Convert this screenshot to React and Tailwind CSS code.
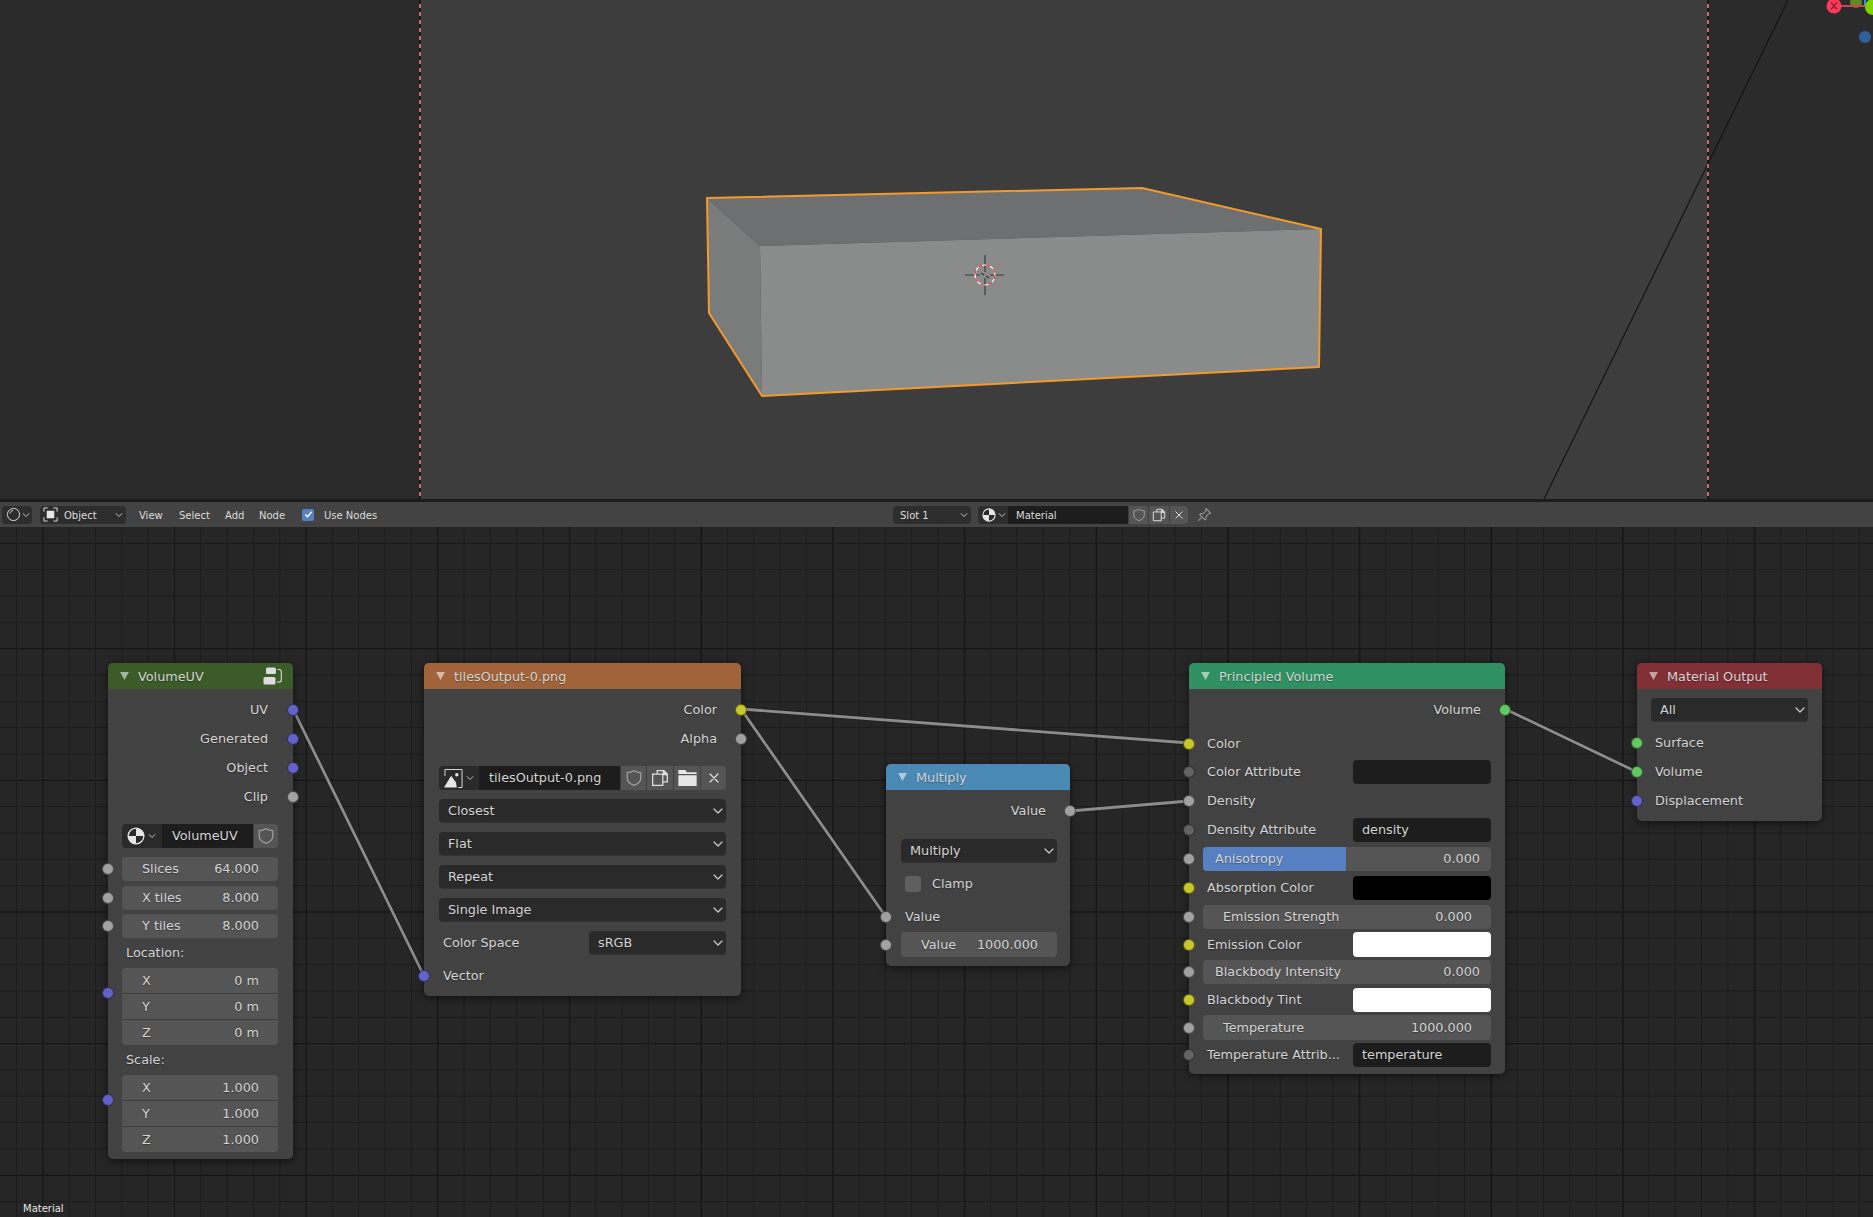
const font = { fontFamily: '"DejaVu Sans", sans-serif' };

function Chevron({ className = "" }) {
  return (
    <svg viewBox="0 0 10 6" className={`w-[10px] h-[6px] shrink-0 ${className}`} fill="none" stroke="#c8c8c8" strokeWidth="1.3" strokeLinecap="round" strokeLinejoin="round">
      <path d="M1 1l4 4 4-4" />
    </svg>
  );
}

function SphereIcon({ size = 15 }) {
  return (
    <svg viewBox="0 0 16 16" width={size} height={size} className="shrink-0">
      <circle cx="8" cy="8" r="7" fill="#e6e6e6" />
      <path d="M8 1a7 7 0 0 0-7 7h7zM8 8v7a7 7 0 0 0 7-7z" fill="#2a2a2a" />
      <circle cx="8" cy="8" r="7" fill="none" stroke="#e6e6e6" strokeWidth="1.2" />
    </svg>
  );
}

function ShieldIcon({ size = 16 }) {
  return (
    <svg viewBox="0 0 16 16" width={size} height={size} fill="none" stroke="#a0a0a0" strokeWidth="1.1">
      <path d="M8 1.5c2 1.2 3.8 1.6 6 1.7v5c0 3-2.6 5-6 6.3-3.4-1.3-6-3.3-6-6.3v-5c2.200-.1 4-.5 6-1.700z" />
    </svg>
  );
}

function CopyIcon({ size = 16 }) {
  return (
    <svg viewBox="0 0 16 16" width={size} height={size} fill="none" stroke="#e0e0e0" strokeWidth="1.1">
      <path d="M5.500 4.500V1.500h6l3 3v7h-4" />
      <path d="M1.500 4.500h9v10h-9z" />
      <path d="M11 1.500v3.500h3.500" fill="#e0e0e0" />
    </svg>
  );
}

function CloseIcon({ size = 10 }) {
  return (
    <svg viewBox="0 0 10 10" width={size} height={size} fill="none" stroke="#e0e0e0" strokeWidth="1.2" strokeLinecap="round">
      <path d="M1 1l8 8M9 1l-8 8" />
    </svg>
  );
}

function FolderIcon() {
  return (
    <svg viewBox="0 0 16 14" width="19" height="16" fill="#e6e6e6">
      <path d="M0 0h6l1.500 2H16v1.500H0zM0 4.500h16V14H0z" />
    </svg>
  );
}

function PinIcon() {
  return (
    <svg viewBox="0 0 16 16" width="15" height="15" fill="none" stroke="#9a9a9a" strokeWidth="1.1" strokeLinejoin="round">
      <path d="M9.500 1.500l5 5-2 .7-3 3 .2 2.500-1.200 1-5.500-5.500 1-1.200 2.500.2 3-3zM5 11l-3.500 3.500" />
    </svg>
  );
}

function ImageIcon() {
  return (
    <svg viewBox="0 0 20 20" width="19" height="19" className="shrink-0">
      <path d="M1 .5h18v19h-4" fill="none" stroke="#e0e0e0" strokeWidth="1" />
      <path d="M1 .5v7" fill="none" stroke="#e0e0e0" strokeWidth="1" />
      <path d="M0 19.500L7.500 7l5 7 1 5.500z" fill="#e6e6e6" />
      <circle cx="13.500" cy="6" r="1.800" fill="#e6e6e6" />
    </svg>
  );
}

function GroupIcon() {
  return (
    <svg viewBox="0 0 19 18" width="19" height="18" className="absolute right-[11px] top-[4px]">
      <rect x="3" y="0.500" width="10" height="6.500" rx="1.500" fill="#dcdcdc" />
      <rect x="0.500" y="10" width="12" height="7.500" rx="1.500" fill="#dcdcdc" />
      <path d="M14.500 2.500h1.500c1.500 0 2.300.8 2.300 2.200v8c0 1.500-.8 2.300-2.300 2.300h-2" fill="none" stroke="#dcdcdc" strokeWidth="1.100" />
    </svg>
  );
}

function Socket({ side = "left", color = "bg-[#a1a1a1]", top = "top-1/2" }) {
  const pos = side === "left" ? "left-[-6px]" : "right-[-6px]";
  return <span className={`absolute ${pos} ${top} -translate-y-1/2 w-[12px] h-[12px] rounded-full border border-black/50 ${color}`} />;
}

function Row({ socket, side = "left", socketTop, className = "", children }) {
  return (
    <div className={`relative flex items-center ${className}`}>
      {socket && <Socket side={side} color={socket} top={socketTop} />}
      {children}
    </div>
  );
}

function Output({ label, socket, className = "pr-[24px]" }) {
  return (
    <Row socket={socket} side="right" className={`h-[29px] justify-end ${className}`}>
      {label}
    </Row>
  );
}

function Input({ label, socket, className = "h-[29px] pl-[18px]" }) {
  return (
    <Row socket={socket} className={className}>
      {label}
    </Row>
  );
}

function Dropdown({ label, className = "" }) {
  return (
    <div className={`flex items-center justify-between h-[24px] pl-[9px] pr-[3px] rounded-[4px] bg-[#2a2a2a] border-b border-[#333333] ${className}`}>
      <span className="pt-[1px]">{label}</span>
      <Chevron />
    </div>
  );
}

function NumField({ label, value, className = "pl-[20px] pr-[19px]" }) {
  return (
    <div className={`flex-1 flex items-center justify-between h-full rounded-[4px] bg-[#555555] ${className}`}>
      <span>{label}</span>
      <span>{value}</span>
    </div>
  );
}

function NodeBox({ title, head, className = "", icon, children }) {
  return (
    <div className={`absolute rounded-[5px] bg-[#424242] text-[12.8px] text-[#d4d4d4] shadow-[0_2px_8px_rgba(0,0,0,0.55)] [text-shadow:0_1px_1px_rgba(0,0,0,0.35)] ${className}`}>
      <div className={`relative flex items-center h-[26px] pl-[12px] gap-[9px] rounded-t-[5px] ${head}`}>
        <svg viewBox="0 0 10 9" className="w-[9px] h-[8px] shrink-0" fill="#ffffff" fillOpacity="0.55">
          <path d="M0 0h10L5 9z" />
        </svg>
        <span className="pt-[1px]">{title}</span>
        {icon}
      </div>
      {children}
    </div>
  );
}

function VectorGroup({ items }) {
  return (
    <div className="flex-1 flex flex-col h-[77px] rounded-[4px] overflow-hidden bg-[#555555] divide-y divide-[#3d3d3d]">
      {items.map(([k, v]) => (
        <div key={k} className="flex-1 flex items-center justify-between pl-[20px] pr-[19px]">
          <span>{k}</span>
          <span>{v}</span>
        </div>
      ))}
    </div>
  );
}

function IconButton({ className = "", children }) {
  return <div className={`flex items-center justify-center h-full bg-[#555555] border-l border-[#3d3d3d] ${className}`}>{children}</div>;
}

const BLUE = "bg-[#6363c7]";
const GREY = "bg-[#a1a1a1]";
const DARK = "bg-[#636363]";
const YELLOW = "bg-[#c7c729]";
const GREEN = "bg-[#63c763]";

function Viewport() {
  return (
    <div className="relative flex h-[499px] bg-[#2b2b2b]">
      <div className="w-[420px]" />
      <div className="w-[1288px] bg-[#3d3d3d]" />
      <svg viewBox="0 0 1873 499" className="absolute inset-0 w-[1873px] h-[499px]">
        <path d="M1788 0L1544 499" stroke="#141414" strokeWidth="1.200" />
        <path d="M420 0V499M1708 0V499" stroke="#111111" strokeWidth="1.500" strokeDasharray="4 4" />
        <path d="M420 0V499M1708 0V499" stroke="#ff7878" strokeWidth="1.500" strokeDasharray="4 4" strokeDashoffset="4" />
        <path d="M707 198L760 246L762 396L709 313z" fill="#7a7c7b" />
        <path d="M707 198L1142 188L1321 229L760 246z" fill="#6e6f71" />
        <path d="M760 246L1321 229L1319 367L762 396z" fill="#8a8b8b" />
        <path d="M707 198L1142 188L1321 229L1319 367L762 396L709 313z" fill="none" stroke="#f39a2e" strokeWidth="2" strokeLinejoin="round" />
        <path d="M985 255V272M985 278V295M965 275H980M990 275H1004" stroke="#3a3a3a" strokeWidth="1.200" />
        <circle cx="985" cy="275" r="10" fill="none" stroke="#ffffff" strokeWidth="1.200" />
        <circle cx="985" cy="275" r="10" fill="none" stroke="#e8323c" strokeWidth="1.200" strokeDasharray="4 4" />
        <path d="M981 273l3 2M986 276l3 2" stroke="#111111" strokeWidth="1" />
        <circle cx="1856" cy="2" r="6" fill="#5f8a24" />
        <path d="M1834 6H1866" stroke="#d8405a" strokeWidth="2" />
        <path d="M1865 0V6" stroke="#3d8ee0" strokeWidth="2" />
        <circle cx="1834" cy="6" r="7.500" fill="#fb3b5a" />
        <path d="M1831 2.500l6 7M1837 2.500l-6 7" stroke="#8c1c30" strokeWidth="1.200" />
        <circle cx="1873" cy="7" r="8" fill="#7fd400" />
        <circle cx="1865" cy="37" r="6" fill="#2f5f9c" />
      </svg>
    </div>
  );
}

function HeaderBar() {
  return (
    <div className="flex items-center h-[25px] pl-[2px] bg-[#434343] text-[10px] text-[#dcdcdc]">
      <div className="flex items-center w-[30px] h-[18px] pl-[4px] rounded-[4px] bg-[#2d2d2d]">
        <svg viewBox="0 0 16 16" width="15" height="15" fill="none" stroke="#e0e0e0" strokeWidth="1" className="shrink-0">
          <circle cx="8" cy="8" r="6.500" />
          <path d="M4.500 7c0-2 1.200-3 3-3.300" />
        </svg>
        <Chevron className="scale-75" />
      </div>
      <div className="flex items-center ml-[8px] w-[86px] h-[18px] pl-[3px] pr-[2px] rounded-[4px] bg-[#2d2d2d]">
        <svg viewBox="0 0 16 16" width="15" height="15" fill="none" stroke="#e0e0e0" strokeWidth="1">
          <path d="M1 5V1h4M11 1h4v4M15 11v4h-4M5 15H1v-4" />
          <rect x="4" y="4" width="8" height="8" fill="#e6e6e6" stroke="none" />
        </svg>
        <span className="ml-[6px] pt-[1px]">Object</span>
        <Chevron className="ml-auto scale-75" />
      </div>
      <span className="ml-[13px] w-[40px] pt-[1px]">View</span>
      <span className="w-[46px] pt-[1px]">Select</span>
      <span className="w-[34px] pt-[1px]">Add</span>
      <span className="w-[43px] pt-[1px]">Node</span>
      <div className="flex items-center justify-center w-[12px] h-[12px] rounded-[2px] bg-[#5680c2]">
        <svg viewBox="0 0 10 10" width="9" height="9" fill="none" stroke="#ffffff" strokeWidth="1.500">
          <path d="M1.500 5l2.500 2.500L8.500 2" />
        </svg>
      </div>
      <span className="ml-[10px] w-[52px] pt-[1px] whitespace-nowrap">Use Nodes</span>
      <div className="flex items-center justify-between ml-[517px] w-[78px] h-[18px] pl-[7px] pr-[2px] rounded-[4px] bg-[#2d2d2d]">
        <span className="pt-[1px]">Slot 1</span>
        <Chevron className="scale-75" />
      </div>
      <div className="flex items-center h-[18px] ml-[7px] rounded-[4px] overflow-hidden">
        <div className="flex items-center justify-center gap-[1px] w-[30px] h-full pl-[2px] bg-[#2d2d2d]">
          <SphereIcon size={14} />
          <Chevron className="scale-75" />
        </div>
        <div className="flex items-center w-[120px] h-full pl-[8px] pt-[1px] bg-[#1d1d1d]">Material</div>
        <IconButton className="w-[20px]"><ShieldIcon size={14} /></IconButton>
        <IconButton className="w-[21px]"><CopyIcon size={14} /></IconButton>
        <IconButton className="w-[19px]"><CloseIcon size={8} /></IconButton>
      </div>
      <div className="ml-[9px]"><PinIcon /></div>
    </div>
  );
}

function VolumeUVNode() {
  return (
    <NodeBox title="VolumeUV" head="bg-[#3b5b28]" className="left-[108px] top-[136px] w-[185px]" icon={<GroupIcon />}>
      <div className="pt-[6px] pb-[7px]">
        <Output label="UV" socket={BLUE} className="pr-[25px]" />
        <Output label="Generated" socket={BLUE} className="pr-[25px]" />
        <Output label="Object" socket={BLUE} className="pr-[25px]" />
        <Output label="Clip" socket={GREY} className="pr-[25px]" />
        <Row className="mt-[13px] h-[24px] ml-[14px] mr-[15px] rounded-[4px] overflow-hidden">
          <div className="flex items-center justify-center gap-[2px] w-[40px] h-full bg-[#2a2a2a]">
            <SphereIcon size={18} />
            <Chevron className="scale-75" />
          </div>
          <div className="flex-1 flex items-center h-full pl-[10px] bg-[#1d1d1d]">VolumeUV</div>
          <IconButton className="w-[25px]"><ShieldIcon size={18} /></IconButton>
        </Row>
        <Row socket={GREY} className="mt-[9px] h-[24px] pl-[14px] pr-[15px]"><NumField label="Slices" value="64.000" /></Row>
        <Row socket={GREY} className="mt-[5px] h-[24px] pl-[14px] pr-[15px]"><NumField label="X tiles" value="8.000" /></Row>
        <Row socket={GREY} className="mt-[4px] h-[24px] pl-[14px] pr-[15px]"><NumField label="Y tiles" value="8.000" /></Row>
        <div className="flex items-center mt-[5px] h-[20px] pl-[18px]">Location:</div>
        <Row socket={BLUE} socketTop="top-[25px]" className="mt-[5px] h-[77px] pl-[14px] pr-[15px]">
          <VectorGroup items={[["X", "0 m"], ["Y", "0 m"], ["Z", "0 m"]]} />
        </Row>
        <div className="flex items-center mt-[5px] h-[20px] pl-[18px]">Scale:</div>
        <Row socket={BLUE} socketTop="top-[25px]" className="mt-[5px] h-[77px] pl-[14px] pr-[15px]">
          <VectorGroup items={[["X", "1.000"], ["Y", "1.000"], ["Z", "1.000"]]} />
        </Row>
      </div>
    </NodeBox>
  );
}

function ImageNode() {
  return (
    <NodeBox title="tilesOutput-0.png" head="bg-[#a1643a]" className="left-[424px] top-[136px] w-[317px]">
      <div className="pt-[6px] pb-[6px]">
        <Output label="Color" socket={YELLOW} />
        <Output label="Alpha" socket={GREY} />
        <div className="flex items-center mt-[13px] h-[24px] mx-[15px] rounded-[4px] overflow-hidden">
          <div className="flex items-center justify-center gap-[2px] w-[40px] h-full bg-[#2a2a2a]">
            <ImageIcon />
            <Chevron className="scale-75" />
          </div>
          <div className="flex items-center w-[141px] h-full pl-[10px] bg-[#1d1d1d] whitespace-nowrap">tilesOutput-0.png</div>
          <IconButton className="w-[26px]"><ShieldIcon size={18} /></IconButton>
          <IconButton className="w-[27px]"><CopyIcon size={18} /></IconButton>
          <IconButton className="w-[27px]"><FolderIcon /></IconButton>
          <IconButton className="w-[26px]"><CloseIcon /></IconButton>
        </div>
        <Dropdown label="Closest" className="mt-[9px] mx-[15px]" />
        <Dropdown label="Flat" className="mt-[9px] mx-[15px]" />
        <Dropdown label="Repeat" className="mt-[9px] mx-[15px]" />
        <Dropdown label="Single Image" className="mt-[9px] mx-[15px]" />
        <div className="flex items-center justify-between mt-[9px] h-[24px] pl-[19px] pr-[15px]">
          <span>Color Space</span>
          <Dropdown label="sRGB" className="w-[137px]" />
        </div>
        <Input label="Vector" socket={BLUE} className="mt-[6px] h-[29px] pl-[19px]" />
      </div>
    </NodeBox>
  );
}

function MathNode() {
  return (
    <NodeBox title="Multiply" head="bg-[#4a89b3]" className="left-[886px] top-[237px] w-[184px]">
      <div className="pt-[6px] pb-[9px]">
        <Output label="Value" socket={GREY} />
        <Dropdown label="Multiply" className="mt-[14px] ml-[15px] mr-[13px]" />
        <div className="flex items-center mt-[6px] h-[29px] pl-[19px]">
          <span className="w-[16px] h-[16px] rounded-[3px] bg-[#5f5f5f]" />
          <span className="ml-[11px]">Clamp</span>
        </div>
        <Input label="Value" socket={GREY} className="mt-[3px] h-[31px] pl-[19px]" />
        <Row socket={GREY} className="h-[25px] pl-[15px] pr-[13px]"><NumField label="Value" value="1000.000" /></Row>
      </div>
    </NodeBox>
  );
}

function ColorRow({ label, socket, field, className = "", children }) {
  return (
    <Row socket={socket} className={`justify-between pl-[18px] pr-[14px] ${className}`}>
      <span className="whitespace-nowrap">{label}</span>
      <div className={`flex items-center w-[138px] h-full pl-[9px] rounded-[4px] ${field}`}>{children}</div>
    </Row>
  );
}

function PrincipledNode() {
  return (
    <NodeBox title="Principled Volume" head="bg-[#2f9162]" className="left-[1189px] top-[136px] w-[316px]">
      <div className="pt-[6px] pb-[7px]">
        <Output label="Volume" socket={GREEN} />
        <Input label="Color" socket={YELLOW} className="mt-[5px] h-[29px] pl-[18px]" />
        <ColorRow label="Color Attribute" socket={DARK} field="bg-[#1d1d1d]" className="mt-[2px] h-[24px]" />
        <Input label="Density" socket={GREY} className="mt-[2px] h-[29px] pl-[18px]" />
        <ColorRow label="Density Attribute" socket={DARK} field="bg-[#1d1d1d]" className="mt-[3px] h-[24px]">density</ColorRow>
        <Row socket={GREY} className="mt-[5px] h-[24px] px-[14px]">
          <div className="relative flex-1 flex items-center justify-between h-full pl-[12px] pr-[11px] rounded-[4px] bg-[#555555] overflow-hidden">
            <span className="absolute left-0 top-0 w-[143px] h-full bg-[#5680c2]" />
            <span className="relative">Anisotropy</span>
            <span className="relative">0.000</span>
          </div>
        </Row>
        <ColorRow label="Absorption Color" socket={YELLOW} field="bg-black" className="mt-[5px] h-[24px]" />
        <Row socket={GREY} className="mt-[5px] h-[24px] px-[14px]"><NumField label="Emission Strength" value="0.000" /></Row>
        <ColorRow label="Emission Color" socket={YELLOW} field="bg-white" className="mt-[3px] h-[25px]" />
        <Row socket={GREY} className="mt-[3px] h-[24px] px-[14px]"><NumField label="Blackbody Intensity" value="0.000" className="pl-[12px] pr-[11px]" /></Row>
        <ColorRow label="Blackbody Tint" socket={YELLOW} field="bg-white" className="mt-[4px] h-[24px]" />
        <Row socket={GREY} className="mt-[3px] h-[25px] px-[14px]"><NumField label="Temperature" value="1000.000" /></Row>
        <ColorRow label="Temperature Attrib..." socket={DARK} field="bg-[#1d1d1d]" className="mt-[3px] h-[24px]">temperature</ColorRow>
      </div>
    </NodeBox>
  );
}

function OutputNode() {
  return (
    <NodeBox title="Material Output" head="bg-[#813036]" className="left-[1637px] top-[136px] w-[185px]">
      <div className="pt-[9px] pb-[6px]">
        <Dropdown label="All" className="mx-[14px]" />
        <Input label="Surface" socket={GREEN} className="mt-[6px] h-[29px] pl-[18px]" />
        <Input label="Volume" socket={GREEN} />
        <Input label="Displacement" socket={BLUE} />
      </div>
    </NodeBox>
  );
}

function Links() {
  const d = "M293 182L424 449M741 182L1189 216M741 182L886 390M1070 284L1189 274M1505 182L1637 245";
  return (
    <svg viewBox="0 0 1873 690" className="absolute inset-0 w-[1873px] h-[690px]" fill="none">
      <path d={d} stroke="#1c1c1c" strokeWidth="4.500" strokeOpacity="0.600" />
      <path d={d} stroke="#8c8c8c" strokeWidth="2.800" />
    </svg>
  );
}

export default function App() {
  return (
    <div className="flex flex-col w-[1873px] h-[1217px] overflow-hidden bg-[#1d1d1d]" style={font}>
      <Viewport />
      <div className="h-[3px] bg-[#1c1c1c]" />
      <HeaderBar />
      <div className="relative flex-1 bg-[#262626] bg-[linear-gradient(90deg,#141414_1px,transparent_1px),linear-gradient(0deg,#141414_1px,transparent_1px),linear-gradient(90deg,#1b1b1b_1px,transparent_1px),linear-gradient(0deg,#1b1b1b_1px,transparent_1px)] bg-[size:131.7px_131.7px,131.7px_131.7px,26.34px_26.34px,26.34px_26.34px] bg-[position:42.4px_0,0_122.2px,16px_0,0_16.8px]">
        <Links />
        <VolumeUVNode />
        <ImageNode />
        <MathNode />
        <PrincipledNode />
        <OutputNode />
        <span className="absolute left-[23px] bottom-[1px] text-[10px] text-[#e6e6e6]">Material</span>
      </div>
    </div>
  );
}
